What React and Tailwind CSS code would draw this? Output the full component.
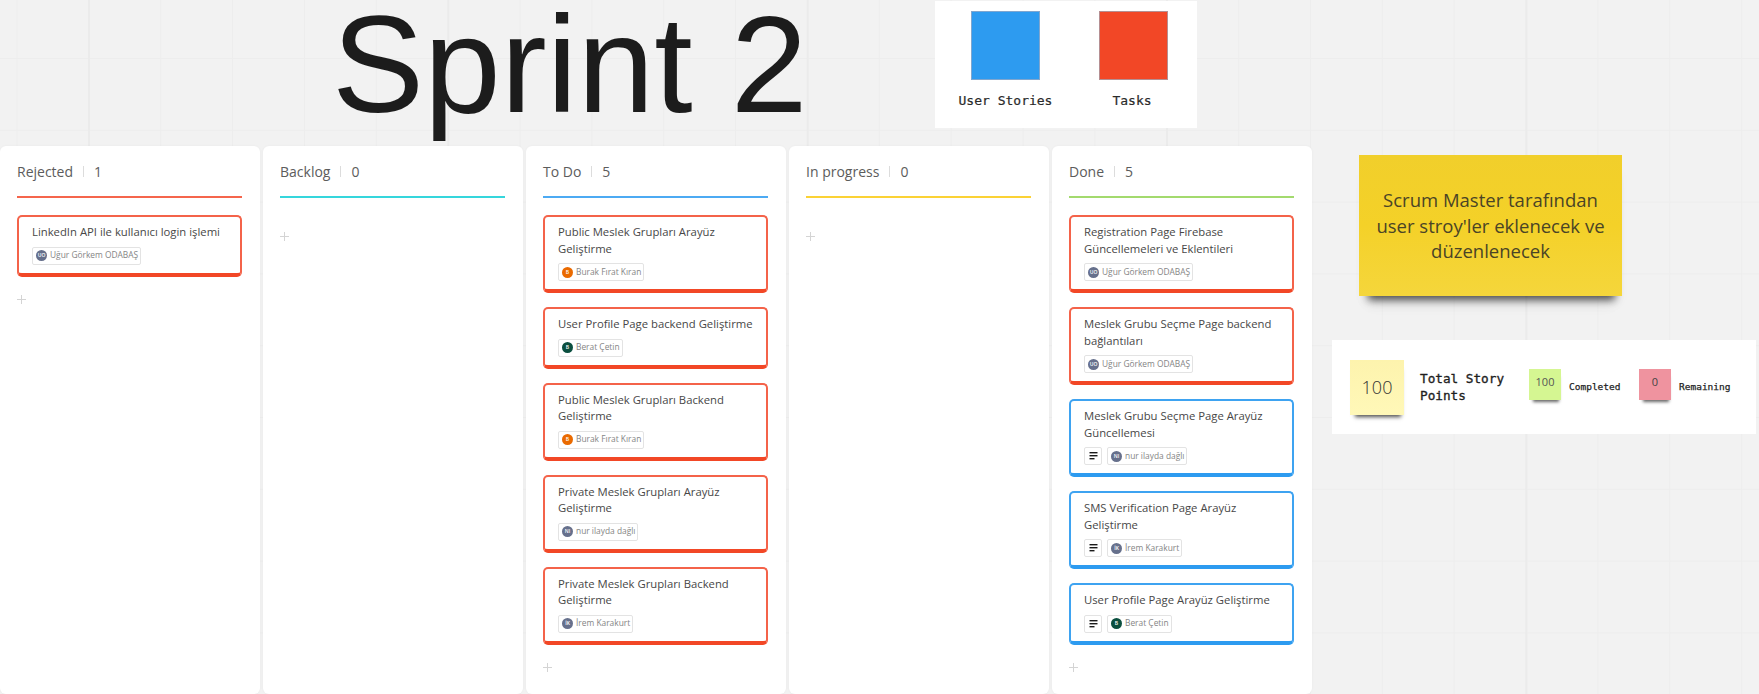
const RED = "red";
const BLUE = "blue";

function ListIcon() {
  return (
    <svg width="9" height="8" viewBox="0 0 9 8" className="block">
      <rect x="0.5" y="0" width="8" height="1.4" fill="#1a1a1a" />
      <rect x="0.5" y="3" width="8" height="1.4" fill="#1a1a1a" />
      <rect x="0.5" y="6" width="5" height="1.4" fill="#1a1a1a" />
    </svg>
  );
}

function Plus() {
  return (
    <svg width="9" height="9" viewBox="0 0 9 9" className="block">
      <rect x="4" y="0" width="1" height="9" fill="#d4d4d4" />
      <rect x="0" y="4" width="9" height="1" fill="#d4d4d4" />
    </svg>
  );
}

function Tag({ name, initials, orange, green }) {
  return (
    <div className="flex h-[18px] items-center gap-[3px] rounded-[2px] border border-[#e3e3e3] pl-[3px] pr-[2px]">
      <span
        className={
          "flex h-[11px] w-[11px] shrink-0 items-center justify-center rounded-full text-[5px] font-semibold leading-none text-white " +
          (orange ? "bg-[#ea6a00]" : green ? "bg-[#0b4f3f]" : "bg-[#66708c]")
        }
      >
        {initials}
      </span>
      <span className="whitespace-nowrap text-[8.4px] leading-none text-[#858585]">{name}</span>
    </div>
  );
}

function Card({ title, kind, person, initials, orange, green, icon }) {
  return (
    <div
      className={
        "rounded-[5px] border-2 border-b-[4px] pb-[8px] pl-[13px] pr-[6px] pt-[7px] " +
        (kind === RED ? "border-[#f4634a] border-b-[#f24726]" : "border-[#3ea3f1] border-b-[#2d9bf0]")
      }
    >
      <div className="text-[11.3px] leading-[16.5px] text-[#474747]">{title}</div>
      <div className="mt-[6px] flex gap-[5px]">
        {icon && (
          <div className="flex h-[18px] w-[18px] items-center justify-center rounded-[2px] border border-[#e3e3e3]">
            <ListIcon />
          </div>
        )}
        <Tag name={person} initials={initials} orange={orange} green={green} />
      </div>
    </div>
  );
}

function Column({ name, count, line, cards }) {
  return (
    <section className="h-[548px] w-[260px] shrink-0 rounded-[6px] bg-white px-[17.5px] shadow-[0_0_3px_rgba(0,0,0,0.04)]">
      <header className="flex h-[52px] items-start border-b-2 pt-[16px]" style={{ borderColor: line }}>
        <span className="text-[14px] leading-[19px] text-[#5c5c5c]">{name}</span>
        <span className="ml-[10px] mt-[4px] h-[11px] w-px bg-[#dcdcdc]" />
        <span className="ml-[10px] text-[14px] leading-[19px] text-[#5c5c5c]">{count}</span>
      </header>
      <div className={"flex flex-col gap-[14px] " + (cards.length ? "pt-[17px]" : "pt-[29px]")}>
        {cards.map((c) => (
          <Card key={c.title} {...c} />
        ))}
        <div className="flex h-[18px] items-center">
          <Plus />
        </div>
      </div>
    </section>
  );
}

const uo = { person: "Uğur Görkem ODABAŞ", initials: "UO" };
const bf = { person: "Burak Fırat Kıran", initials: "B", orange: true };
const bc = { person: "Berat Çetin", initials: "B", green: true };
const ni = { person: "nur ilayda dağlı", initials: "NI" };
const ik = { person: "İrem Karakurt", initials: "İK" };

const columns = [
  { name: "Rejected", count: 1, line: "#f5654c", cards: [{ title: "LinkedIn API ile kullanıcı login işlemi", kind: RED, ...uo }] },
  { name: "Backlog", count: 0, line: "#35d6dc", cards: [] },
  {
    name: "To Do",
    count: 5,
    line: "#4caaf3",
    cards: [
      { title: "Public Meslek Grupları Arayüz Geliştirme", kind: RED, ...bf },
      { title: "User Profile Page backend Geliştirme", kind: RED, ...bc },
      { title: "Public Meslek Grupları Backend Geliştirme", kind: RED, ...bf },
      { title: "Private Meslek Grupları Arayüz Geliştirme", kind: RED, ...ni },
      { title: "Private Meslek Grupları Backend Geliştirme", kind: RED, ...ik },
    ],
  },
  { name: "In progress", count: 0, line: "#fbd235", cards: [] },
  {
    name: "Done",
    count: 5,
    line: "#a3da6e",
    cards: [
      { title: "Registration Page Firebase Güncellemeleri ve Eklentileri", kind: RED, ...uo },
      { title: "Meslek Grubu Seçme Page backend bağlantıları", kind: RED, ...uo },
      { title: "Meslek Grubu Seçme Page Arayüz Güncellemesi", kind: BLUE, icon: true, ...ni },
      { title: "SMS Verification Page Arayüz Geliştirme", kind: BLUE, icon: true, ...ik },
      { title: "User Profile Page Arayüz Geliştirme", kind: BLUE, icon: true, ...bc },
    ],
  },
];

const mono = "font-['DejaVu_Sans_Mono',monospace]";

export default function App() {
  return (
    <div className="relative h-[694px] w-[1759px] overflow-hidden bg-[#f2f2f2] font-['Open_Sans',sans-serif]">
      {/* board grid */}
      <div className="absolute inset-0 bg-[linear-gradient(to_right,#ebebeb_1.5px,transparent_1.5px),linear-gradient(to_right,#ededed_1px,transparent_1px),linear-gradient(to_bottom,#ededed_1px,transparent_1px)] bg-[size:359.35px_100%,71.87px_100%,100%_71.8px] bg-[position:88px_0,16.5px_0,0_58px]" />

      {/* title */}
      <h1 className="absolute left-[332px] top-0 font-['Liberation_Sans',Arial,sans-serif] text-[138px] font-normal leading-[128px] whitespace-nowrap text-[#1c1c1c]">
        Sprint 2
      </h1>

      {/* legend */}
      <div className={"absolute left-[935px] top-[1px] h-[127px] w-[262px] bg-white " + mono}>
        <div className="absolute left-[36px] top-[10px] h-[69px] w-[69px] border border-[#7fa6cf] bg-[#2d9bf0]" />
        <div className="absolute left-[164px] top-[10px] h-[69px] w-[69px] border border-[#b58f92] bg-[#f24726]" />
        <div className="absolute left-0 top-[92px] flex w-full text-[13px] leading-[16px] text-[#2a2a2a] [-webkit-text-stroke:0.2px_#2a2a2a]">
          <span className="w-[141px] text-center">User Stories</span>
          <span className="w-[121px] pr-[9px] text-center">Tasks</span>
        </div>
      </div>

      {/* columns */}
      <div className="relative ml-[-0.5px] flex gap-[3px] pt-[146px]">
        {columns.map((c) => (
          <Column key={c.name} {...c} />
        ))}
      </div>

      {/* big sticky */}
      <div className="absolute left-[1359px] top-[155px] flex h-[141px] w-[263px] items-center justify-center bg-gradient-to-b from-[#f1cf2b] via-[#f4d128] to-[#f5d63b] px-[10px] text-center text-[18.5px] leading-[25.5px] text-[#4a4426] shadow-[1px_12px_8px_-8px_rgba(0,0,0,0.65),0_16px_14px_-10px_rgba(0,0,0,0.1)]">
        Scrum Master tarafından user stroy'ler eklenecek ve düzenlenecek
      </div>

      {/* story points */}
      <div className="absolute left-[1332px] top-[340px] flex h-[94px] w-[424px] items-center bg-white pl-[18px]">
        <div className="flex h-[55px] w-[54px] shrink-0 items-center justify-center bg-gradient-to-b from-[#fdf3ad] to-[#fff8b8] text-[18px] font-light text-[#333] shadow-[1px_6px_4px_-4px_rgba(0,0,0,0.7)]">
          100
        </div>
        <div className={"ml-[16px] w-[104px] text-[12.7px] leading-[17px] text-[#1f1f1f] [-webkit-text-stroke:0.35px_#1f1f1f] " + mono}>
          Total Story Points
        </div>
        <div className="ml-[5px] mb-[6px] flex h-[31px] w-[32px] shrink-0 items-center justify-center bg-[#d5f692] pb-[3px] text-[11px] text-[#555] shadow-[1px_5px_3px_-3px_rgba(0,0,0,0.6)]">
          100
        </div>
        <div className={"ml-[8px] w-[70px] text-[9.5px] leading-[12px] text-[#1f1f1f] [-webkit-text-stroke:0.25px_#1f1f1f] " + mono}>Completed</div>
        <div className="ml-[0px] mb-[6px] flex h-[31px] w-[32px] shrink-0 items-center justify-center bg-[#ef939f] pb-[3px] text-[11px] text-[#444] shadow-[1px_5px_3px_-3px_rgba(0,0,0,0.6)]">
          0
        </div>
        <div className={"ml-[8px] text-[9.5px] leading-[12px] text-[#1f1f1f] [-webkit-text-stroke:0.25px_#1f1f1f] " + mono}>Remaining</div>
      </div>
    </div>
  );
}
